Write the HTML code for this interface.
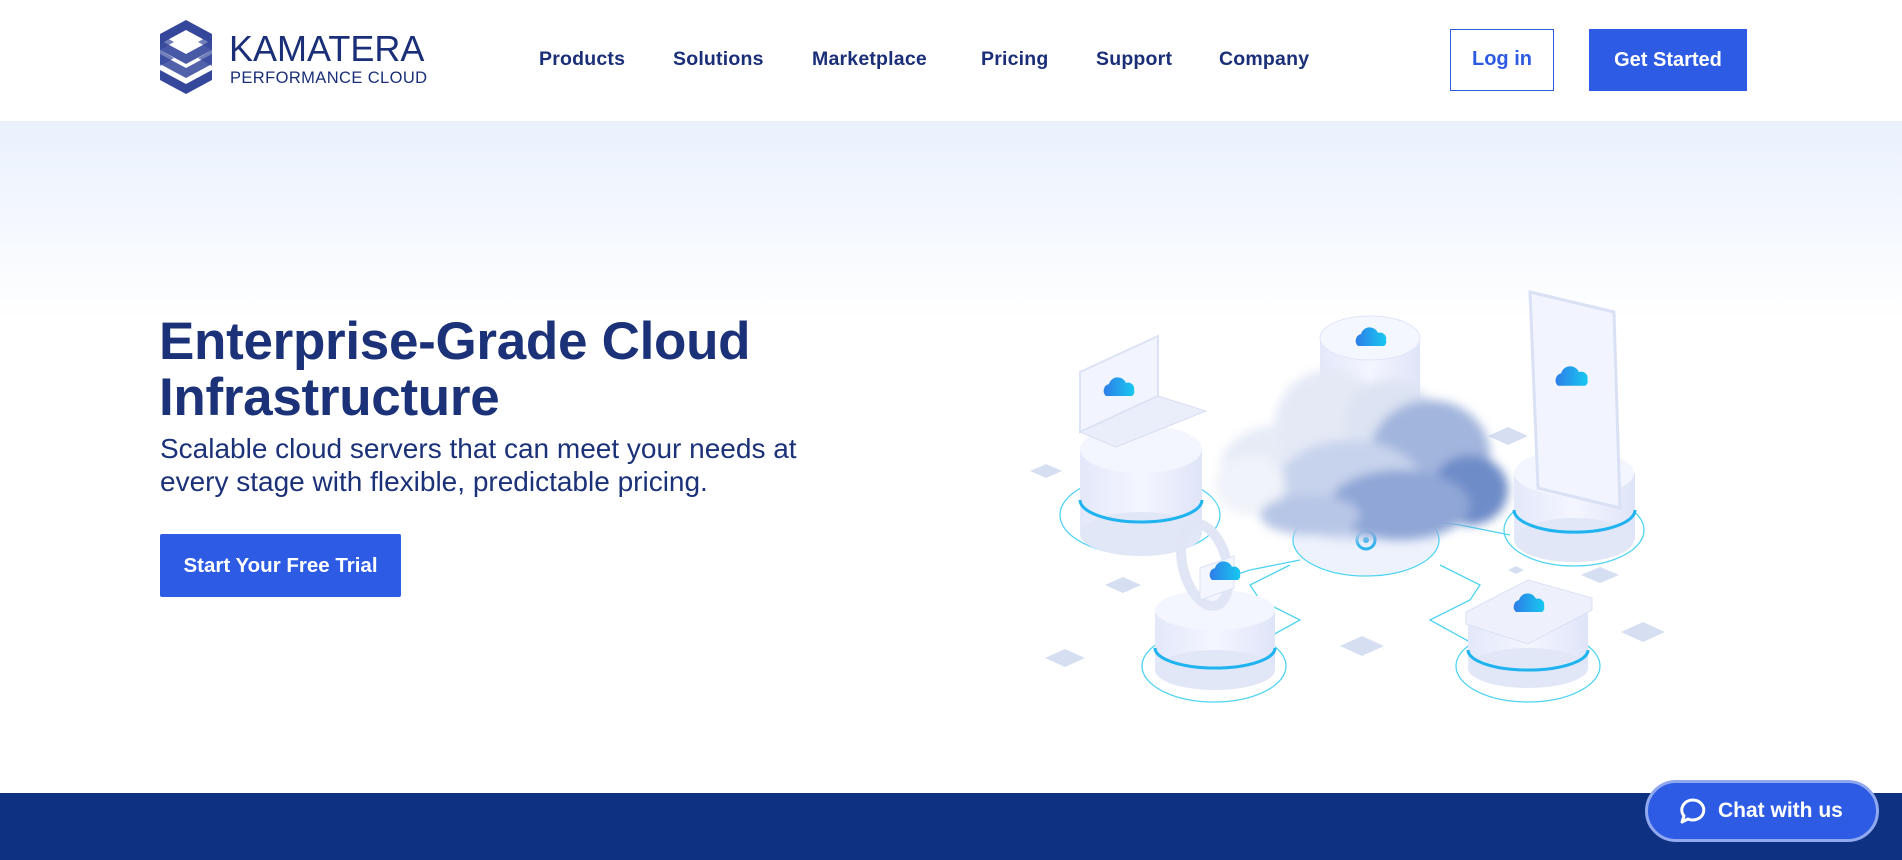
<!DOCTYPE html>
<html><head><meta charset="utf-8">
<style>
*{margin:0;padding:0;box-sizing:border-box}
body{width:1902px;height:860px;overflow:hidden;font-family:"Liberation Sans",Arial,sans-serif;background:#fff;position:relative}
.hdr{position:absolute;left:0;top:0;width:1902px;height:121px;background:#fff}
.hero{position:absolute;left:0;top:121px;width:1902px;height:672px;background:linear-gradient(#eaf1fd 0,#f3f7fe 90px,#fff 200px)}
.band{position:absolute;left:0;top:793px;width:1902px;height:67px;background:#0f3182}
.nav a{position:absolute;top:48px;font-size:19.5px;font-weight:bold;color:#1a2f78;text-decoration:none;letter-spacing:.2px}
.login{position:absolute;left:1450px;top:29px;width:104px;height:62px;border:1.5px solid #2d5be3;color:#2d5be3;font-size:20px;font-weight:bold;text-align:center;line-height:59px}
.gs{position:absolute;left:1589px;top:29px;width:158px;height:62px;background:#2d5be3;color:#fff;font-size:20px;font-weight:bold;text-align:center;line-height:62px}
h1{position:absolute;left:159px;top:314px;font-size:53px;line-height:56px;color:#1b3178;font-weight:bold;letter-spacing:-.3px}
.sub{position:absolute;left:160px;top:432px;font-size:28px;line-height:33px;color:#1b3178;width:760px}
.cta{position:absolute;left:160px;top:534px;width:241px;height:63px;background:#2d5be3;color:#fff;font-size:20.5px;font-weight:bold;text-align:center;line-height:63px;border-radius:2px}
.chat{position:absolute;left:1645px;top:780px;width:234px;height:62px;border-radius:31px;background:#2d5be3;border:3px solid #8fa8f0;color:#fff;font-size:21px;font-weight:bold;line-height:56px;padding-left:70px}
.k1{position:absolute;left:229px;top:28px;font-size:36px;color:#1a2f78;letter-spacing:0}
.k2{position:absolute;left:230px;top:69px;font-size:16.5px;color:#1a2f78;letter-spacing:.4px}
</style></head><body>
<div class="hdr">
<svg style="position:absolute;left:158px;top:20px" width="56" height="74" viewBox="0 0 56 74">
<g fill="#34479b">
<path d="M28 0L54 14V24L28 10L2 24V14Z"/>
<path d="M2 20L28 34L54 20V30L28 44L2 30Z" opacity=".9"/>
<path d="M2 34L28 48L54 34V44L28 58L2 44Z" opacity=".85"/>
<path d="M2 50L28 64L54 50V60L28 74L2 60Z"/>
<path d="M2 14L16 22L2 30Z M54 14L40 22L54 30Z M2 30L16 38L2 46ZM54 30L40 38L54 46Z" opacity=".7"/>
</g></svg>
<div class="k1">KAMATERA</div>
<div class="k2">PERFORMANCE CLOUD</div>
<div class="nav">
<a style="left:539px">Products</a>
<a style="left:673px">Solutions</a>
<a style="left:812px">Marketplace</a>
<a style="left:981px">Pricing</a>
<a style="left:1096px">Support</a>
<a style="left:1219px">Company</a>
</div>
<div class="login">Log in</div>
<div class="gs">Get Started</div>
</div>
<div class="hero"></div>
<h1>Enterprise-Grade Cloud<br>Infrastructure</h1>
<div class="sub">Scalable cloud servers that can meet your needs at<br>every stage with flexible, predictable pricing.</div>
<div class="cta">Start Your Free Trial</div>

<svg style="position:absolute;left:0;top:0" width="1902" height="860" viewBox="0 0 1902 860">
<defs>
<linearGradient id="cyl" x1="0" x2="1"><stop offset="0" stop-color="#e3e8fa"/><stop offset=".5" stop-color="#f4f6ff"/><stop offset="1" stop-color="#dfe4f8"/></linearGradient>
<linearGradient id="cl" x1="0" y1="0" x2="1" y2="1"><stop offset="0" stop-color="#f2f5fb"/><stop offset=".5" stop-color="#a9bbe0"/><stop offset="1" stop-color="#4f74bd"/></linearGradient>
<linearGradient id="ic" x1="0" x2="1"><stop offset="0" stop-color="#2e7de8"/><stop offset="1" stop-color="#18c8f0"/></linearGradient>
<filter id="bl"><feGaussianBlur stdDeviation="5"/></filter>
<g id="cicon"><path d="M-14 6 a7 7 0 0 1 3-12 a9 9 0 0 1 17-1 a6 6 0 0 1 8 7 a5 5 0 0 1 -2 6Z" fill="url(#ic)"/></g>
</defs>
<g fill="#d6def2">
<path d="M1030 471l16-7 16 7-16 7z"/><path d="M1045 658l20-9 20 9-20 9z"/><path d="M1105 585l18-8 18 8-18 8z"/>
<path d="M1340 646l22-10 22 10-22 10z"/><path d="M1488 436l20-9 20 9-20 9z"/><path d="M1581 575l19-8 19 8-19 8z"/>
<path d="M1621 632l22-10 22 10-22 10z"/><path d="M1508 570l8-4 8 4-8 4z"/>
</g>
<g fill="none" stroke="#4fd3f2" stroke-width="1.3">
<ellipse cx="1140" cy="515" rx="80" ry="40"/>
<ellipse cx="1574" cy="530" rx="70" ry="36"/>
<ellipse cx="1214" cy="666" rx="72" ry="36"/>
<ellipse cx="1528" cy="666" rx="72" ry="36"/>
<ellipse cx="1366" cy="540" rx="73" ry="36"/>
<path d="M1290 565l-40 20 10 15 40 20-40 22M1440 565l40 20-10 15-40 20 40 22M1420 520l40 5 50 10M1300 560l-50 10-30 10"/>
</g>
<ellipse cx="1366" cy="540" rx="72" ry="35" fill="#eef2fc"/>
<circle cx="1366" cy="540" r="9" fill="none" stroke="#2ab3ee" stroke-width="3"/>
<circle cx="1366" cy="540" r="3" fill="#2ab3ee"/>
<!-- tower -->
<rect x="1320" y="338" width="100" height="80" fill="url(#cyl)"/>
<ellipse cx="1370" cy="338" rx="50" ry="22" fill="#f5f7ff" stroke="#e0e6f8"/>
<use href="#cicon" x="1372" y="340"/>
<!-- cloud -->
<g filter="url(#bl)">
<ellipse cx="1280" cy="470" rx="60" ry="45" fill="#e6ebf6"/>
<ellipse cx="1330" cy="425" rx="55" ry="55" fill="#e4e9f5"/>
<ellipse cx="1390" cy="420" rx="45" ry="40" fill="#dce3f2"/>
<ellipse cx="1430" cy="455" rx="60" ry="55" fill="#a2b5dd"/>
<ellipse cx="1470" cy="490" rx="38" ry="35" fill="#6e8cc8"/>
<ellipse cx="1350" cy="490" rx="75" ry="50" fill="#c7d3ec"/>
<ellipse cx="1400" cy="505" rx="70" ry="35" fill="#8fa6d6"/>
<ellipse cx="1250" cy="485" rx="35" ry="30" fill="#f0f3f9"/>
<ellipse cx="1310" cy="515" rx="50" ry="20" fill="#b7c6e6"/>
</g>
<!-- left cylinder -->
<rect x="1080" y="449" width="122" height="85" fill="url(#cyl)"/>
<ellipse cx="1141" cy="534" rx="61" ry="22" fill="#e2e7f8"/>
<path d="M1080 500a61 22 0 0 0 122 0" fill="none" stroke="#1fb3f0" stroke-width="3"/>
<ellipse cx="1141" cy="449" rx="61" ry="24" fill="#f4f6ff"/>
<!-- laptop -->
<path d="M1080 432l0-60 78-36 0 60z" fill="#f2f4ff" stroke="#dde3f6" stroke-width="2"/>
<path d="M1080 432l36 15 90-36-48-15z" fill="#eaeefb" stroke="#d8def2"/>
<use href="#cicon" x="1120" y="390"/>
<!-- right cylinder -->
<rect x="1514" y="473" width="121" height="67" fill="url(#cyl)"/>
<ellipse cx="1574" cy="540" rx="60" ry="22" fill="#e2e7f8"/>
<path d="M1514 510a60 22 0 0 0 121 0" fill="none" stroke="#1fb3f0" stroke-width="3"/>
<ellipse cx="1574" cy="473" rx="60" ry="23" fill="#f4f6ff"/>
<!-- phone -->
<path d="M1530 292l84 20 6 196-82-20z" fill="#f2f4ff" stroke="#dbe1f5" stroke-width="3"/>
<use href="#cicon" x="1574" y="390" transform="translate(-80 -30) scale(1.05)"/>
<!-- bottom-left -->
<rect x="1155" y="610" width="120" height="60" fill="url(#cyl)"/>
<ellipse cx="1215" cy="670" rx="60" ry="20" fill="#e2e7f8"/>
<path d="M1155 648a60 20 0 0 0 120 0" fill="none" stroke="#1fb3f0" stroke-width="3"/>
<ellipse cx="1215" cy="610" rx="60" ry="20" fill="#f4f6ff"/>
<ellipse cx="1205" cy="565" rx="22" ry="42" fill="none" stroke="#e1e6f7" stroke-width="10" transform="rotate(-15 1205 565)"/>
<path d="M1200 568l34-12 0 32-34 12z" fill="#f4f6ff" stroke="#dbe1f5"/>
<use href="#cicon" x="1240" y="578" transform="translate(-14 -4)"/>
<!-- bottom-right -->
<rect x="1468" y="610" width="120" height="58" fill="url(#cyl)"/>
<ellipse cx="1528" cy="668" rx="60" ry="20" fill="#e2e7f8"/>
<path d="M1468 650a60 20 0 0 0 120 0" fill="none" stroke="#1fb3f0" stroke-width="3"/>
<path d="M1466 612l62-32 64 18 0 12-64 34-62-20z" fill="#eef1fc" stroke="#dbe1f5"/>
<use href="#cicon" x="1530" y="606"/>
</svg>

<div class="band"></div>
<div class="chat"><svg style="position:absolute;left:30px;top:14px" width="30" height="30" viewBox="0 0 30 30"><path d="M15 3a11 10 0 1 1-5 19l-6 3 2-6A11 10 0 0 1 15 3z" fill="none" stroke="#fff" stroke-width="3" stroke-linejoin="round"/></svg>Chat with us</div>
</body></html>
